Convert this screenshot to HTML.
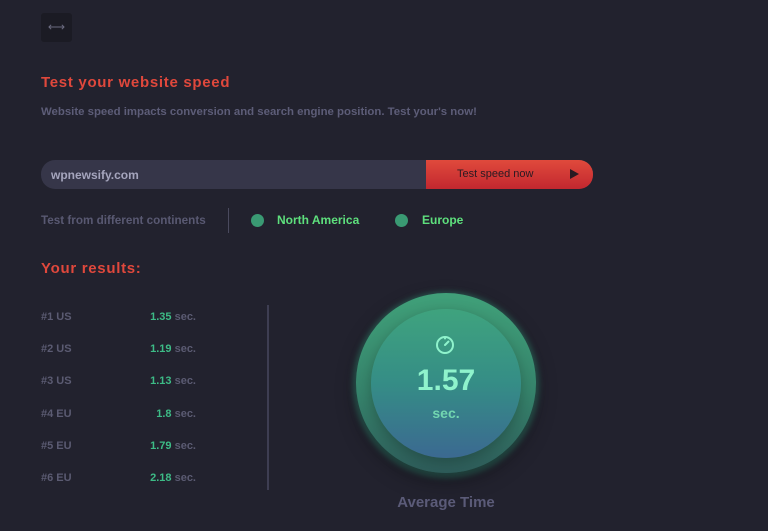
<!DOCTYPE html>
<html><head><style>
body{margin:0;width:768px;height:531px;background:#22222e;font-family:"Liberation Sans",sans-serif;position:relative;overflow:hidden}
.a{position:absolute;white-space:nowrap}
</style></head><body>
<div class="a" style="left:41px;top:13px;width:31px;height:29px;background:#1b1b24;border-radius:3px;color:#6b6b80;font-size:12px;text-align:center;line-height:29px">⟷</div>
<div class="a" style="left:41px;top:74px;font-size:15px;font-weight:bold;color:#e0483c;letter-spacing:0.7px">Test your website speed</div>
<div class="a" style="left:41px;top:106px;font-size:11.4px;font-weight:bold;color:#5d5d78">Website speed impacts conversion and search engine position. Test your's now!</div>
<div class="a" style="left:41px;top:160px;width:552px;height:29px;background:#363649;border-radius:14px;overflow:hidden">
<div class="a" style="left:10px;top:8px;font-size:12px;font-weight:bold;color:#a5a5bd">wpnewsify.com</div>
<div class="a" style="left:385px;top:0;width:167px;height:29px;background:linear-gradient(#e04a3c,#c2272f)">
<div class="a" style="left:31px;top:8px;font-size:11px;color:#2a1a22">Test speed now</div>
<div class="a" style="left:144px;top:9px;width:0;height:0;border-left:9px solid #2a1a22;border-top:5.5px solid transparent;border-bottom:5.5px solid transparent"></div>
</div></div>
<div class="a" style="left:41px;top:214px;font-size:11.7px;font-weight:bold;color:#595972">Test from different continents</div>
<div class="a" style="left:228px;top:208px;width:1px;height:25px;background:#4a4a5e"></div>
<div class="a" style="left:251px;top:214px;width:13px;height:13px;border-radius:50%;background:#3a9a73"></div>
<div class="a" style="left:277px;top:213px;font-size:12px;font-weight:bold;color:#5ee07d">North America</div>
<div class="a" style="left:395px;top:214px;width:13px;height:13px;border-radius:50%;background:#3a9a73"></div>
<div class="a" style="left:422px;top:213px;font-size:12px;font-weight:bold;color:#5ee07d">Europe</div>
<div class="a" style="left:41px;top:260px;font-size:15px;font-weight:bold;color:#e0483c;letter-spacing:0.7px">Your results:</div>
<div class="a" style="left:267px;top:305px;width:2px;height:185px;background:#3e3e52"></div>
<div class="a" style="left:353px;top:292px;width:186px;height:186px;border-radius:50%;background:radial-gradient(circle at 50% 45%,#2f6f5f 0%,#2b5a53 70%,#262c36 100%);filter:blur(3px)"></div>
<div class="a" style="left:356px;top:293px;width:180px;height:180px;border-radius:50%;background:linear-gradient(#40a079,#36846c 55%,#2e5c5a);box-shadow:0 8px 20px rgba(0,0,0,.35)"></div>
<div class="a" style="left:371px;top:309px;width:150px;height:149px;border-radius:50%;background:linear-gradient(#3fa37e,#358d86 50%,#3b6991);box-shadow:0 4px 14px rgba(0,0,0,.25)"></div>
<svg class="a" style="left:435px;top:335px" width="20" height="20" viewBox="0 0 20 20" fill="none" stroke="#8ff3cc" stroke-width="2" stroke-linecap="round"><circle cx="10" cy="10" r="8"/><path d="M10 10 L13.5 6.5"/><path d="M10 2v1.5"/></svg>
<div class="a" style="left:371px;top:364px;width:150px;text-align:center;font-size:30px;font-weight:bold;color:#8ff3cc">1.57</div>
<div class="a" style="left:371px;top:405px;width:150px;text-align:center;font-size:14px;font-weight:bold;color:#72d6b0">sec.</div>
<div class="a" style="left:346px;top:494px;width:200px;text-align:center;font-size:15px;font-weight:bold;color:#5b5b78">Average Time</div>
<div class="a" style="left:41px;top:301px;font-size:11px;font-weight:bold;color:#5b5b72;line-height:32.2px">#1 US<br>#2 US<br>#3 US<br>#4 EU<br>#5 EU<br>#6 EU</div>
<div class="a" style="left:100px;top:301px;width:96px;text-align:right;font-size:11px;font-weight:bold;line-height:32.2px;color:#3dbb86">1.35 <span style="color:#5b5b72">sec.</span><br>1.19 <span style="color:#5b5b72">sec.</span><br>1.13 <span style="color:#5b5b72">sec.</span><br>1.8 <span style="color:#5b5b72">sec.</span><br>1.79 <span style="color:#5b5b72">sec.</span><br>2.18 <span style="color:#5b5b72">sec.</span></div>
</body></html>
